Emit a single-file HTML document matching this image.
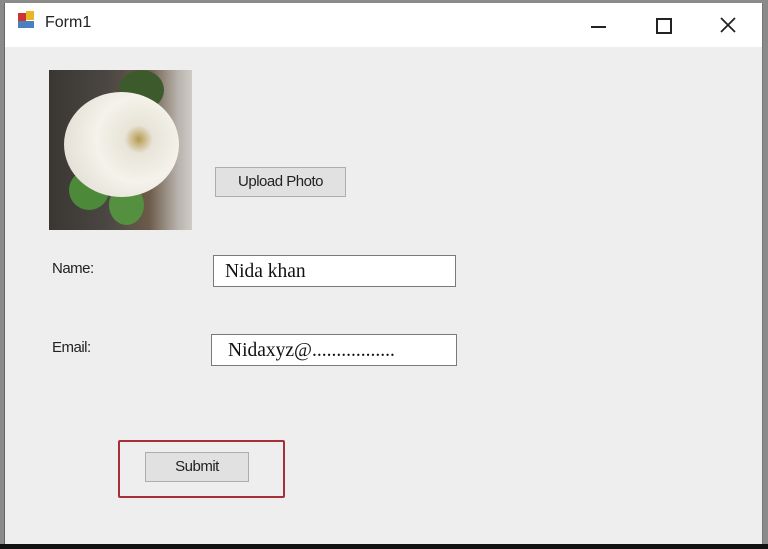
<!DOCTYPE html>
<html><head><style>
body{margin:0;width:768px;height:549px;background:#8a8a8a;position:relative;overflow:hidden;font-family:"Liberation Sans",sans-serif}
.win{position:absolute;left:4px;top:3px;width:757px;height:541px;background:#eeeeee;border-left:1px solid #666;border-right:1px solid #777}
.title{position:absolute;left:0;top:0;width:757px;height:44px;background:#fff}
.black{position:absolute;left:0;top:544px;width:768px;height:5px;background:#111}
.abs{position:absolute}
.btn{position:absolute;background:#e1e1e1;border:1px solid #adadad;font-size:15px;color:#222;text-align:center;letter-spacing:-0.5px}
.tb{position:absolute;background:#fff;border:1px solid #7a7a7a;font-family:"Liberation Serif",serif;font-size:19.5px;color:#111}
.lbl{position:absolute;font-size:15px;color:#222;letter-spacing:-0.5px}
</style></head><body>
<div class="win">
 <div class="title">
  <div class="abs" style="left:13px;top:10px;width:8px;height:8px;background:#c33"></div>
  <div class="abs" style="left:21px;top:8px;width:8px;height:9px;background:#e9b820"></div>
  <div class="abs" style="left:13px;top:18px;width:16px;height:7px;background:#4a7fc0"></div>
  <div class="abs" style="left:40px;top:11px;font-size:16px;color:#222">Form1</div>
  <div class="abs" style="left:586px;top:23px;width:15px;height:2px;background:#222"></div>
  <div class="abs" style="left:651px;top:15px;width:12px;height:12px;border:2px solid #222"></div>
  <svg class="abs" style="left:715px;top:14px" width="16" height="16"><path d="M1 1L15 15M15 1L1 15" stroke="#222" stroke-width="1.8"/></svg>
 </div>
</div>
<div class="abs" style="left:49px;top:70px;width:143px;height:160px;background:linear-gradient(90deg,#3a3632 0%,#4a4642 40%,#6b5b4a 70%,#b8b2ac 90%,#d0cbc6 100%);overflow:hidden">
 <div class="abs" style="left:70px;top:0;width:45px;height:40px;background:#3d5a2c;border-radius:50%"></div>
 <div class="abs" style="left:20px;top:100px;width:40px;height:40px;background:#4c8a3a;border-radius:50%"></div>
 <div class="abs" style="left:60px;top:115px;width:35px;height:40px;background:#558f40;border-radius:50%"></div>
 <div class="abs" style="left:15px;top:22px;width:115px;height:105px;background:radial-gradient(circle at 65% 45%,#b59a50 0%,#e8e4d8 15%,#f4f2ea 45%,#e4e0d6 80%,#cfcac0 100%);border-radius:50%"></div>
</div>
<div class="btn" style="left:215px;top:167px;width:129px;height:28px;line-height:28px">Upload Photo</div>
<div class="lbl" style="left:52px;top:260px">Name:</div>
<div class="tb" style="left:213px;top:255px;width:243px;height:32px;line-height:32px;padding-left:11px;box-sizing:border-box">Nida khan</div>
<div class="lbl" style="left:52px;top:339px">Email:</div>
<div class="tb" style="left:211px;top:334px;width:246px;height:32px;line-height:32px;padding-left:16px;box-sizing:border-box">Nidaxyz@.................</div>
<div class="abs" style="left:118px;top:440px;width:163px;height:54px;border:2px solid #a5303a;border-radius:2px"></div>
<div class="btn" style="left:145px;top:452px;width:102px;height:28px;line-height:28px">Submit</div>
<div class="black"></div>
</body></html>
